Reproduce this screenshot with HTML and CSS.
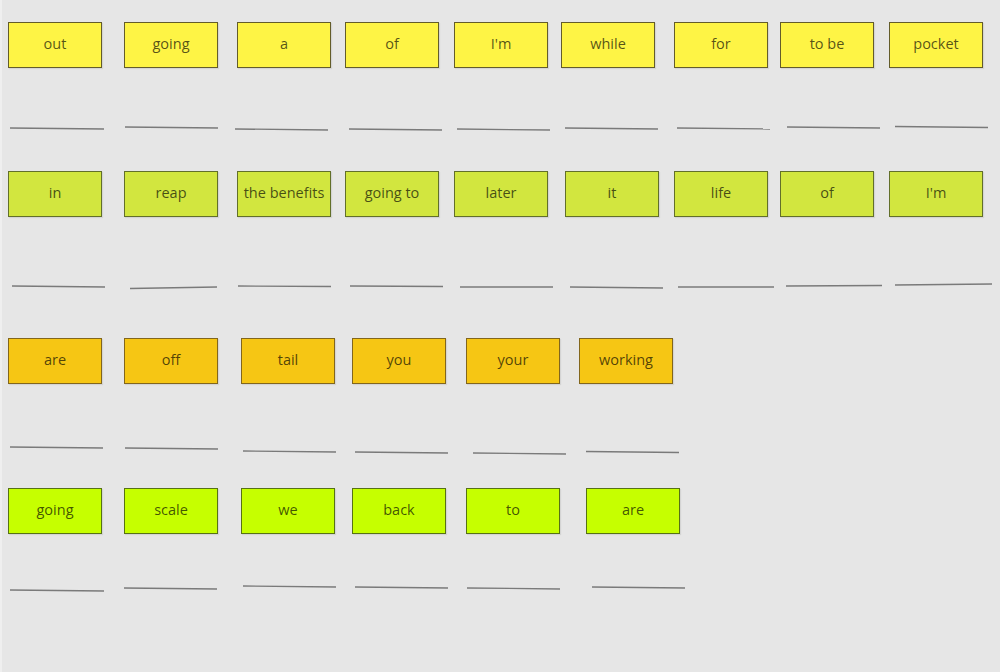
FILE: index.html
```html
<!DOCTYPE html>
<html lang="en">
<head>
<meta charset="utf-8">
<title>Worksheet</title>
<link rel="stylesheet" href="styles.css">
</head>
<body>
<main class="sheet">
  <div class="row row-1 yellow">
    <div class="tile">out</div><div class="tile">going</div><div class="tile">a</div><div class="tile">of</div><div class="tile">I'm</div><div class="tile">while</div><div class="tile">for</div><div class="tile">to be</div><div class="tile">pocket</div>
  </div>
  <svg class="answers a-1" width="1000" height="104" viewBox="0 0 1000 104">
    <line x1="10" y1="61" x2="104" y2="62"/><line x1="125" y1="60" x2="218" y2="61"/><line x1="235" y1="62" x2="328" y2="63"/><line x1="349" y1="62" x2="442" y2="63"/><line x1="457" y1="62" x2="550" y2="63"/><line x1="565" y1="61" x2="658" y2="62"/><line x1="677" y1="61" x2="770" y2="62"/><line x1="787" y1="60" x2="880" y2="61"/><line x1="895" y1="59.5" x2="988" y2="60.5"/>
  </svg>
  <div class="row row-2 lime">
    <div class="tile">in</div><div class="tile">reap</div><div class="tile">the benefits</div><div class="tile">going to</div><div class="tile">later</div><div class="tile">it</div><div class="tile">life</div><div class="tile">of</div><div class="tile">I'm</div>
  </div>
  <svg class="answers a-2" width="1000" height="122" viewBox="0 0 1000 122">
    <line x1="12" y1="70" x2="105" y2="71"/><line x1="130" y1="72.5" x2="217" y2="71"/><line x1="238" y1="70" x2="331" y2="70.5"/><line x1="350" y1="70" x2="443" y2="70.5"/><line x1="460" y1="71" x2="553" y2="71"/><line x1="570" y1="71" x2="663" y2="72"/><line x1="678" y1="71" x2="774" y2="71"/><line x1="786" y1="70" x2="882" y2="69.5"/><line x1="895" y1="69" x2="992" y2="68"/>
  </svg>
  <div class="row row-3 amber">
    <div class="tile">are</div><div class="tile">off</div><div class="tile">tail</div><div class="tile">you</div><div class="tile">your</div><div class="tile">working</div>
  </div>
  <svg class="answers a-3" width="1000" height="105" viewBox="0 0 1000 105">
    <line x1="10" y1="64" x2="103" y2="65"/><line x1="125" y1="65" x2="218" y2="66"/><line x1="243" y1="68" x2="336" y2="69"/><line x1="355" y1="69" x2="448" y2="70"/><line x1="473" y1="70" x2="566" y2="71"/><line x1="586" y1="68.5" x2="679" y2="69.5"/>
  </svg>
  <div class="row row-4 green">
    <div class="tile">going</div><div class="tile">scale</div><div class="tile">we</div><div class="tile">back</div><div class="tile">to</div><div class="tile">are</div>
  </div>
  <svg class="answers a-4" width="1000" height="139" viewBox="0 0 1000 139">
    <line x1="10" y1="57" x2="104" y2="58"/><line x1="124" y1="55" x2="217" y2="56"/><line x1="243" y1="53" x2="336" y2="54"/><line x1="355" y1="54" x2="448" y2="55"/><line x1="467" y1="55" x2="560" y2="56"/><line x1="592" y1="54" x2="685" y2="55"/>
  </svg>
</main>
</body>
</html>
```
FILE: styles.css
```css
html, body {
  margin: 0;
  padding: 0;
  background: #e6e6e6;
}
body {
  width: 1000px;
  height: 672px;
  overflow: hidden;
  font-family: "Open Sans", "Liberation Sans", sans-serif;
}
.sheet {
  display: flex;
  flex-direction: column;
  padding-top: 22px;
  border-left: 2px solid #efefef;
  box-sizing: border-box;
  width: 1000px;
  height: 672px;
}
.row {
  display: grid;
  height: 45px;
  padding-left: 6px;
  flex: none;
}
.row-1 { grid-template-columns: 116px 113px 108px 109px 107px 113px 106px 109px 94px; }
.row-2 { grid-template-columns: 116px 113px 108px 109px 111px 109px 106px 109px 94px; }
.row-3 { grid-template-columns: 116px 117px 111px 114px 113px 94px; }
.row-4 { grid-template-columns: 116px 117px 111px 114px 120px 94px; }
.tile {
  width: 94px;
  height: 46px;
  box-sizing: border-box;
  border: 1px solid #5c5628;
  box-shadow: 1px 1px 1px rgba(0, 0, 0, 0.08);
  display: flex;
  align-items: center;
  justify-content: center;
  font-size: 14.5px;
  color: rgba(0, 0, 0, 0.68);
  white-space: nowrap;
  padding-bottom: 3px;
}
.yellow .tile { background: #fef445; border-color: #635c2a; }
.lime .tile { background: #d2e63f; border-color: #626f2a; }
.amber .tile { background: #f6c614; border-color: #82661c; }
.green .tile { background: #c6ff00; border-color: #577214; }
.answers {
  display: block;
  margin-left: -2px;
  flex: none;
}
.answers line {
  stroke: #7a7a7a;
  stroke-width: 1.3;
}
```
